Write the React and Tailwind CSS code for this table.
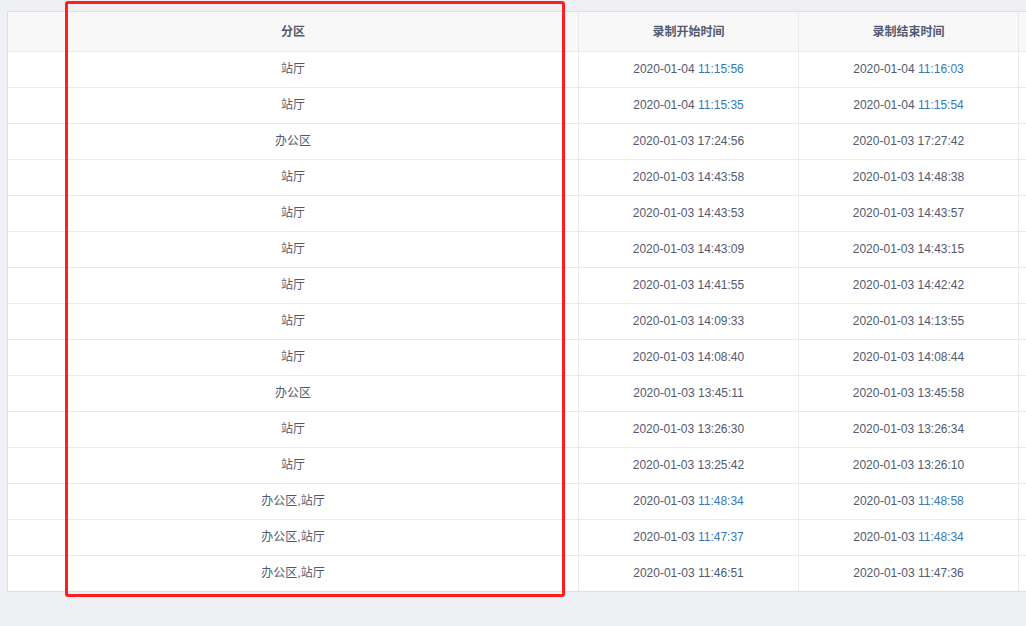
import React from "react";

const rows = [
  ["站厅", "2020-01-04", "11:15:56", "2020-01-04", "11:16:03", true],
  ["站厅", "2020-01-04", "11:15:35", "2020-01-04", "11:15:54", true],
  ["办公区", "2020-01-03", "17:24:56", "2020-01-03", "17:27:42"],
  ["站厅", "2020-01-03", "14:43:58", "2020-01-03", "14:48:38"],
  ["站厅", "2020-01-03", "14:43:53", "2020-01-03", "14:43:57"],
  ["站厅", "2020-01-03", "14:43:09", "2020-01-03", "14:43:15"],
  ["站厅", "2020-01-03", "14:41:55", "2020-01-03", "14:42:42"],
  ["站厅", "2020-01-03", "14:09:33", "2020-01-03", "14:13:55"],
  ["站厅", "2020-01-03", "14:08:40", "2020-01-03", "14:08:44"],
  ["办公区", "2020-01-03", "13:45:11", "2020-01-03", "13:45:58"],
  ["站厅", "2020-01-03", "13:26:30", "2020-01-03", "13:26:34"],
  ["站厅", "2020-01-03", "13:25:42", "2020-01-03", "13:26:10"],
  ["办公区,站厅", "2020-01-03", "11:48:34", "2020-01-03", "11:48:58", true],
  ["办公区,站厅", "2020-01-03", "11:47:37", "2020-01-03", "11:48:34", true],
  ["办公区,站厅", "2020-01-03", "11:46:51", "2020-01-03", "11:47:36"],
];

// some times show a blue tint in the screenshot
const Time = ({ date, time, blue }) => (
  <span>
    {date} <span className={blue ? "text-[#3479b8]" : ""}>{time}</span>
  </span>
);

const cols = "grid grid-cols-[571px_220px_220px_220px]";

export default function App() {
  return (
    <div
      className="relative h-[626px] w-full overflow-hidden bg-[#eef0f4] pl-[7px] pt-[11px] text-[12px] text-[#515a6e]"
      style={{ fontFamily: '"Liberation Sans", "Noto Sans CJK SC", sans-serif' }}
    >
      <div className="w-[1240px] border-t border-b border-l border-[#dcdee2] bg-white">
        {/* header */}
        <div className={`${cols} h-[40px] border-b border-[#e8eaec] bg-[#f8f8f9] font-bold`}>
          <div className="flex items-center justify-center border-r border-[#e8eaec]">分区</div>
          <div className="flex items-center justify-center border-r border-[#e8eaec]">录制开始时间</div>
          <div className="flex items-center justify-center border-r border-[#e8eaec]">录制结束时间</div>
          <div className="border-r border-[#e8eaec]" />
        </div>

        {rows.map((r, i) => (
          <div
            key={i}
            className={`${cols} ${i < rows.length - 1 ? "h-[36px] border-b border-[#e8eaec]" : "h-[35px]"}`}
          >
            <div className="flex items-center justify-center border-r border-[#e8eaec] pb-[1px]">{r[0]}</div>
            <div className="flex items-center justify-center border-r border-[#e8eaec] pb-[1px]">
              <Time date={r[1]} time={r[2]} blue={r[5]} />
            </div>
            <div className="flex items-center justify-center border-r border-[#e8eaec] pb-[1px]">
              <Time date={r[3]} time={r[4]} blue={r[5]} />
            </div>
            <div className="border-r border-[#e8eaec]" />
          </div>
        ))}
      </div>

      {/* red annotation box */}
      <div className="pointer-events-none absolute left-[65px] top-[1px] h-[596px] w-[500px] rounded-[3px] border-[3px] border-[#ff1f1f]" />
    </div>
  );
}
